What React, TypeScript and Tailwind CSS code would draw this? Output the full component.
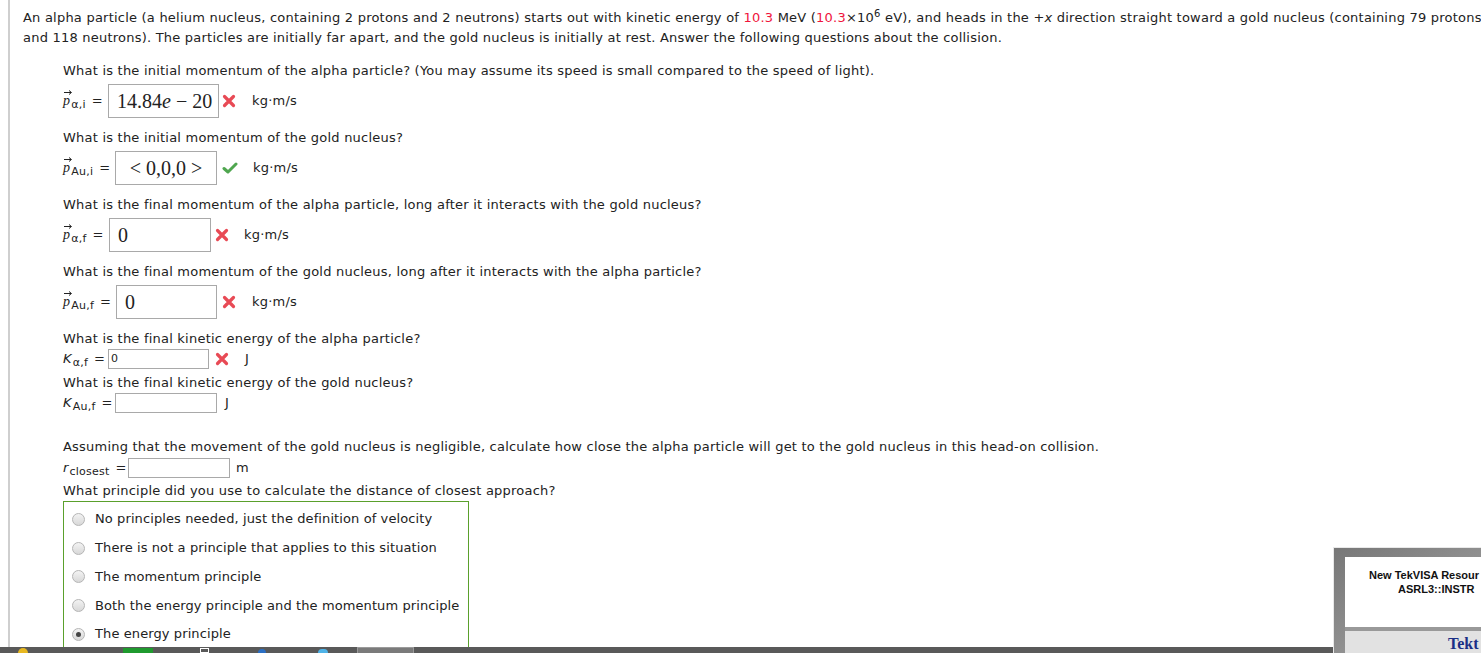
import React from 'react';

const font = { fontFamily: '"DejaVu Sans", Verdana, sans-serif', letterSpacing: '0.22px' };

const RedX = () => (
  <svg width="14" height="14" viewBox="0 0 14 14" className="shrink-0">
    <path d="M2.5 2.5 L11.5 11.5 M11.5 2.5 L2.5 11.5" stroke="#e84a55" strokeWidth="3.2" strokeLinecap="round" />
  </svg>
);

const Check = () => (
  <svg width="16" height="14" viewBox="0 0 16 14" className="shrink-0">
    <path d="M2 7.5 L6 11 L14 3" fill="none" stroke="#4fa64f" strokeWidth="3" strokeLinecap="round" strokeLinejoin="round" />
  </svg>
);

const VecP = () => (
  <span className="relative inline-block italic text-[14px]" style={{ fontFamily: '"Liberation Serif", serif' }}>
    p
    <svg width="8" height="5" viewBox="0 0 8 5" className="absolute left-[1px] top-[-1px]">
      <path d="M0 2.5 H7 M5 0.5 L7.5 2.5 L5 4.5" fill="none" stroke="#222" strokeWidth="1" />
    </svg>
  </span>
);

const Label = ({ sub, vec = true, sym = 'K' }: { sub: string; vec?: boolean; sym?: string }) => (
  <span className="inline-flex items-baseline whitespace-nowrap">
    {vec ? <VecP /> : <span className="italic">{sym}</span>}
    <span className="text-[11px] relative top-[3px] ml-[1px]">{sub}</span>
    <span className="ml-[6px]">=</span>
  </span>
);

const BigBox = ({ w, children }: { w: string; children?: React.ReactNode }) => (
  <div
    className={`${w} h-[34px] border border-[#a9a9a9] flex items-center px-[8px] text-[20px] text-[#222]`}
    style={{ fontFamily: '"Liberation Serif", serif', letterSpacing: 0 }}
  >
    {children}
  </div>
);

const SmallBox = ({ w, children }: { w: string; children?: React.ReactNode }) => (
  <div className={`${w} h-[20px] border border-[#a9a9a9] flex items-center px-[2px] text-[11px]`}>{children}</div>
);

const Radio = ({ on = false }: { on?: boolean }) => (
  <span className="w-[13px] h-[13px] rounded-full border border-[#b5b5b5] bg-gradient-to-b from-[#f3f3f3] to-[#d8d8d8] flex items-center justify-center shrink-0">
    {on && <span className="w-[5px] h-[5px] rounded-full bg-[#444]" />}
  </span>
);

const options = [
  'No principles needed, just the definition of velocity',
  'There is not a principle that applies to this situation',
  'The momentum principle',
  'Both the energy principle and the momentum principle',
  'The energy principle',
];

export default function App() {
  return (
    <div className="relative h-[653px] w-[1481px] overflow-hidden bg-white text-[13px] text-[#222]" style={font}>
      <div className="ml-[8px] h-full border-l-2 border-[#cfcfcf] pl-[13px] pt-[8px] leading-[20px]">
        <p className="whitespace-nowrap">
          An alpha particle (a helium nucleus, containing 2 protons and 2 neutrons) starts out with kinetic energy of{' '}
          <span className="text-[#f0143c]">10.3</span> MeV (<span className="text-[#f0143c]">10.3</span>×10
          <sup className="text-[10px]">6</sup> eV), and heads in the +<i>x</i> direction straight toward a gold nucleus (containing 79 protons
        </p>
        <p>and 118 neutrons). The particles are initially far apart, and the gold nucleus is initially at rest. Answer the following questions about the collision.</p>

        <div className="ml-[40px] mt-[13px]">
          <div>What is the initial momentum of the alpha particle? (You may assume its speed is small compared to the speed of light).</div>
          <div className="mt-[3px] flex items-center">
            <span className="w-[45px]"><Label sub="α,i" /></span>
            <BigBox w="w-[111px]">
              14.84<i>e</i>&nbsp;−&nbsp;20
            </BigBox>
            <span className="ml-[3px]"><RedX /></span>
            <span className="ml-[16px]">kg·m/s</span>
          </div>

          <div className="mt-[10px]">What is the initial momentum of the gold nucleus?</div>
          <div className="mt-[3px] flex items-center">
            <span className="w-[52px]"><Label sub="Au,i" /></span>
            <BigBox w="w-[102px] justify-center">&lt;&nbsp;0,0,0&nbsp;&gt;</BigBox>
            <span className="ml-[5px]"><Check /></span>
            <span className="ml-[15px]">kg·m/s</span>
          </div>

          <div className="mt-[10px]">What is the final momentum of the alpha particle, long after it interacts with the gold nucleus?</div>
          <div className="mt-[3px] flex items-center">
            <span className="w-[46px]"><Label sub="α,f" /></span>
            <BigBox w="w-[102px]">0</BigBox>
            <span className="ml-[4px]"><RedX /></span>
            <span className="ml-[15px]">kg·m/s</span>
          </div>

          <div className="mt-[10px]">What is the final momentum of the gold nucleus, long after it interacts with the alpha particle?</div>
          <div className="mt-[3px] flex items-center">
            <span className="w-[53px]"><Label sub="Au,f" /></span>
            <BigBox w="w-[101px]">0</BigBox>
            <span className="ml-[5px]"><RedX /></span>
            <span className="ml-[16px]">kg·m/s</span>
          </div>

          <div className="mt-[10px]">What is the final kinetic energy of the alpha particle?</div>
          <div className="flex items-center h-[20px]">
            <span className="w-[45px]"><Label sub="α,f" vec={false} /></span>
            <SmallBox w="w-[101px]">0</SmallBox>
            <span className="ml-[6px]"><RedX /></span>
            <span className="ml-[16px]">J</span>
          </div>

          <div className="mt-[4px]">What is the final kinetic energy of the gold nucleus?</div>
          <div className="flex items-center h-[20px]">
            <span className="w-[52px]"><Label sub="Au,f" vec={false} /></span>
            <SmallBox w="w-[102px]" />
            <span className="ml-[8px]">J</span>
          </div>

          <div className="mt-[24px]">
            Assuming that the movement of the gold nucleus is negligible, calculate how close the alpha particle will get to the gold nucleus in this head-on collision.
          </div>
          <div className="mt-[1px] flex items-center h-[20px]">
            <span className="w-[65px]"><Label sub="closest" vec={false} sym="r" /></span>
            <SmallBox w="w-[102px]" />
            <span className="ml-[6px]">m</span>
          </div>

          <div className="mt-[3px]">What principle did you use to calculate the distance of closest approach?</div>
          <div className="w-[406px] border border-[#5aa02c] pt-[3px] pb-[4px]">
            {options.map((o, i) => (
              <div key={o} className="flex items-center h-[28.75px] pl-[8px] tracking-[0.1px]">
                <Radio on={i === 4} />
                <span className="ml-[10px]">{o}</span>
              </div>
            ))}
          </div>
        </div>
      </div>

      {/* taskbar strip */}
      <div className="absolute left-0 right-0 top-[647px] h-[6px] bg-[#595959]">
        <span className="absolute left-[18px] top-[1px] w-[10px] h-[5px] rounded-t-full bg-[#e8b820]" />
        <span className="absolute left-[123px] top-[1px] w-[30px] h-[5px] bg-[#1f9a2e]" />
        <span className="absolute left-[200px] top-[1px] w-[9px] h-[5px] border border-white" />
        <span className="absolute left-[258px] top-[2px] w-[8px] h-[4px] rounded-t-full bg-[#2b6fc4]" />
        <span className="absolute left-[318px] top-[2px] w-[10px] h-[4px] rounded-t-full bg-[#4fb3e8]" />
        <span className="absolute left-[357px] top-[0px] w-[57px] h-[6px] bg-[#7a7a7a] border-t border-x border-[#9a9a9a]" />
      </div>

      {/* TekVISA window */}
      <div className="absolute left-[1333px] top-[547px] w-[160px] h-[110px] bg-[#e8e8e8] p-[1px]">
        <div className="h-full bg-gradient-to-br from-[#777] to-[#aaa] pl-[11px] pt-[9px]">
          <div className="h-[70px] bg-white pl-[24px] pt-[11px] text-[11px] font-bold leading-[14px] text-[#111]" style={{ fontFamily: '"Liberation Sans", Arial, sans-serif', letterSpacing: 0 }}>
            <div className="whitespace-nowrap">New TekVISA Resour</div>
            <div className="pl-[29px]">ASRL3::INSTR</div>
          </div>
          <div className="h-[4px] bg-[#999]" />
          <div className="h-[30px] bg-[#e2e2e2] pl-[103px] pt-[4px] text-[16px] leading-[17px] font-bold text-[#1b2f86]" style={{ fontFamily: '"Liberation Serif", serif', letterSpacing: 0 }}>
            Tekt
          </div>
        </div>
      </div>
    </div>
  );
}
